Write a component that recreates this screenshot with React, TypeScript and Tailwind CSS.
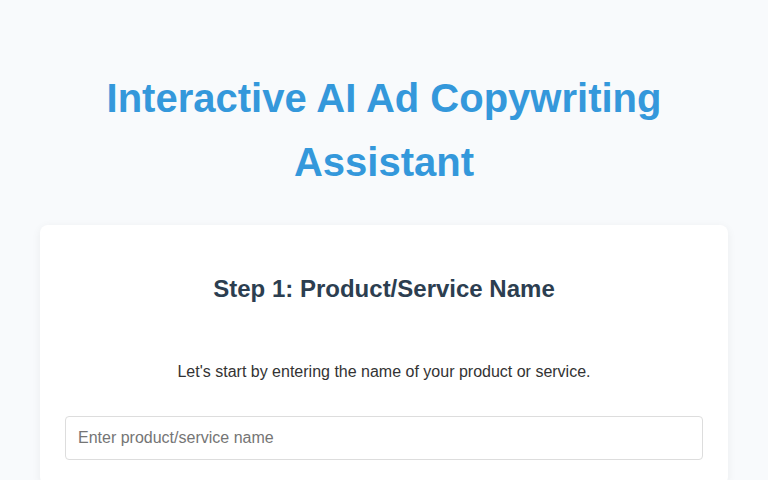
export default function App() {
  return (
    <div
      className="min-h-[480px] bg-[#f8fafc] px-[40px] pt-[66px] pb-[40px]"
      style={{ fontFamily: '"Liberation Sans", Arial, sans-serif' }}
    >
      <h1 className="text-center text-[40px] leading-[64px] font-bold text-[#3498db] mb-[31px]">
        Interactive AI Ad Copywriting
        <br />
        Assistant
      </h1>
      <div className="bg-white rounded-[8px] shadow-[0_2px_10px_rgba(0,0,0,0.06)] px-[25px] pt-[45px] pb-[25px]">
        <h2 className="text-center text-[24px] leading-[38px] font-bold text-[#2c3e50]">
          Step 1: Product/Service Name
        </h2>
        <p className="text-center text-[16px] leading-[26px] text-[#333333] mt-[51px]">
          Let's start by entering the name of your product or service.
        </p>
        <input
          type="text"
          placeholder="Enter product/service name"
          className="mt-[31px] w-full h-[44px] border border-[#dddddd] rounded-[4px] px-[12px] text-[16px] text-[#333333] placeholder:text-[#757575] outline-none"
        />
      </div>
    </div>
  );
}
